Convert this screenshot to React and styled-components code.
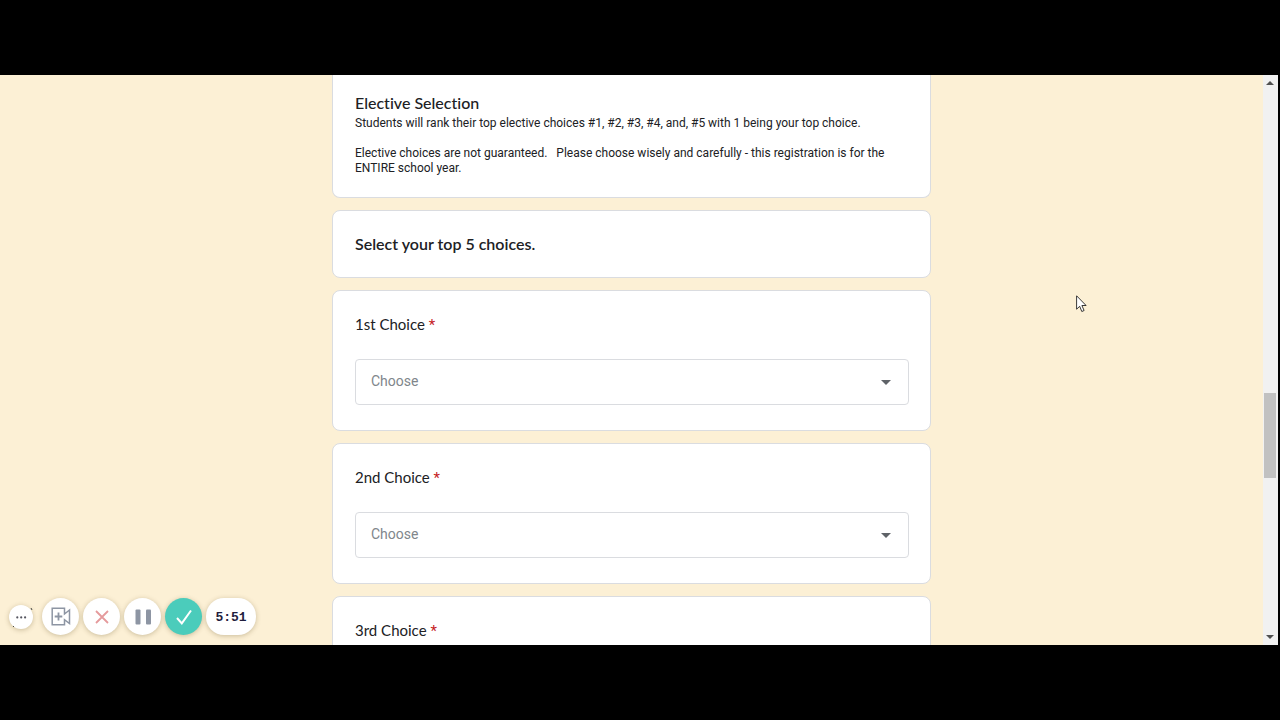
import React from "react";
import styled, { createGlobalStyle } from "styled-components";

const GlobalStyle = createGlobalStyle`
  * {
    box-sizing: border-box;
  }
  body {
    margin: 0;
    background: #000;
    font-family: Roboto, "Liberation Sans", sans-serif;
    font-variant-ligatures: none;
    color: #202124;
  }
`;

const Page = styled.div`
  height: 100vh;
  padding: 75px 2px 75px 0;
  background: #000;
`;
const Screen = styled.div`
  position: relative;
  display: flex;
  height: 100%;
  overflow: hidden;
  background: #fcf0d5;
`;
const Form = styled.form`
  flex: 1;
  display: flex;
  flex-direction: column;
  align-items: center;
  gap: 12px;
`;
const Card = styled.section`
  width: 100%;
  max-width: 599px;
  flex-shrink: 0;
  padding: ${(props) => (props.$compact ? "21px 22px" : "22px 21px 25px 22px")};
  border: 1px solid #dadce0;
  border-radius: 8px;
  background: #fff;
`;
const Title = styled.h2`
  margin: 0;
  font-family: Lato, sans-serif;
  font-size: 16px;
  font-weight: ${(props) => (props.$bold ? 600 : 500)};
  line-height: 24px;
`;
const IntroCard = styled(Card)`
  padding: 16px 22px 21px;
  border-top: 0;
  border-radius: 0 0 8px 8px;

  ${Title} {
    margin-bottom: 1px;
  }
`;
const Text = styled.p`
  margin: 0 0 15px;
  font-size: 12px;
  line-height: 15px;
  white-space: pre-wrap;

  &:last-child {
    margin: 0;
  }
`;
const Label = styled.label`
  display: block;
  margin-bottom: 24px;
  font-family: Lato, sans-serif;
  font-size: 15px;
  line-height: 22px;
`;
const Required = styled.span`
  color: #c5221f;
  font-family: Roboto, sans-serif;
  line-height: 1;
`;
const SelectBox = styled.div`
  display: grid;
  align-items: center;

  > * {
    grid-area: 1 / 1;
  }
`;
const Select = styled.select`
  width: 100%;
  height: 46px;
  padding: 0 15px 2px;
  appearance: none;
  border: 1px solid #dadce0;
  border-radius: 4px;
  background: #fff;
  color: #80868b;
  font-family: Roboto, sans-serif;
  font-size: 14px;
`;
const Caret = styled.svg`
  justify-self: end;
  margin-right: 18px;
  pointer-events: none;
`;

const Scrollbar = styled.div`
  display: flex;
  flex-direction: column;
  align-items: center;
  width: 15px;
  padding-right: 1px;
  background: #f1f1f1;
`;
const ScrollButton = styled.button`
  display: flex;
  align-items: center;
  justify-content: center;
  width: 100%;
  height: 16px;
  padding: 0;
  border: 0;
  background: none;
`;
const ScrollGap = styled.div`
  flex: ${(props) => props.$size};
`;
const Thumb = styled.div`
  flex: 85;
  width: 12px;
  background: #c1c1c1;
`;

const Recorder = styled.div`
  position: absolute;
  left: 9px;
  bottom: 10px;
  display: flex;
  align-items: center;
  gap: 4px;
`;
const RoundButton = styled.button`
  display: flex;
  align-items: center;
  justify-content: center;
  width: 37px;
  height: 37px;
  padding: 0;
  border: 0;
  border-radius: 50%;
  background: ${(props) => (props.$done ? "#4bccbb" : "#fff")};
  box-shadow: 0 1px 5px rgba(90, 70, 20, 0.3);
`;
const MoreButton = styled(RoundButton)`
  width: 24px;
  height: 24px;
  margin-right: 5px;
`;
const Timer = styled.time`
  display: flex;
  align-items: center;
  justify-content: center;
  width: 50px;
  height: 37px;
  padding-top: 2px;
  border-radius: 18px;
  background: #fff;
  box-shadow: 0 1px 5px rgba(90, 70, 20, 0.3);
  color: #1f1d3d;
  font-family: "Liberation Mono", monospace;
  font-size: 13px;
  font-weight: 700;
`;
const Pointer = styled.svg`
  position: absolute;
  top: 220px;
  right: 191px;
`;

const choices = ["1st Choice", "2nd Choice", "3rd Choice"];

const Choice = ({ id, name }) => (
  <Card>
    <Label htmlFor={id}>
      {name} <Required>*</Required>
    </Label>
    <SelectBox>
      <Select id={id} required defaultValue="">
        <option value="">Choose</option>
      </Select>
      <Caret width="10" height="5" viewBox="0 0 10 5">
        <path d="M0 0h10L5 5z" fill="#5f6368" />
      </Caret>
    </SelectBox>
  </Card>
);

const ScrollArrow = ({ down }) => (
  <svg width="8" height="4" viewBox="0 0 8 4">
    <path d={down ? "M0 0h8L4 4z" : "M0 4h8L4 0z"} fill="#505050" />
  </svg>
);

const RecorderBar = () => (
  <Recorder>
    <MoreButton aria-label="More options">
      <svg width="24" height="24" viewBox="0 0 24 24" overflow="visible">
        <path d="M22 3l1 2M4 21l1 1" stroke="#4a4a45" />
        <g fill="#55555f">
          <circle cx="8.3" cy="12.4" r="1.1" />
          <circle cx="12.2" cy="12.4" r="1.1" />
          <circle cx="16.1" cy="12.4" r="1.1" />
        </g>
      </svg>
    </MoreButton>
    <RoundButton aria-label="Add clip">
      <svg width="20" height="20" viewBox="0 0 20 20" fill="none" stroke="#8d95a3" strokeWidth="1.5">
        <path d="M13.5 6.5V1.2H1.2v16.6h12.3v-5.1l5 3.8V3l-5 4z" />
        <path d="M7.5 5.5v8M3.7 9.5h7.6" strokeWidth="1.8" />
      </svg>
    </RoundButton>
    <RoundButton aria-label="Cancel recording">
      <svg width="14" height="14" viewBox="0 0 14 14">
        <path d="M1 1l12 12M13 1L1 13" stroke="#e59a9c" strokeWidth="1.8" />
      </svg>
    </RoundButton>
    <RoundButton aria-label="Pause recording">
      <svg width="16" height="16" viewBox="0 0 16 16" fill="#8d95a3">
        <rect x="0.5" y="0.5" width="5" height="15" rx="1" />
        <rect x="11" y="0.5" width="5" height="15" rx="1" />
      </svg>
    </RoundButton>
    <RoundButton $done aria-label="Finish recording">
      <svg width="16" height="16" viewBox="0 0 16 16">
        <path d="M1 9l4.8 5.3L15 1.5" fill="none" stroke="#fff" strokeWidth="2" />
      </svg>
    </RoundButton>
    <Timer>5:51</Timer>
  </Recorder>
);

const App = () => {
  return (
    <Page>
      <GlobalStyle />
      <Screen>
        <Form>
          <IntroCard>
            <Title>Elective Selection</Title>
            <Text>
              Students will rank their top elective choices #1, #2, #3, #4, and, #5 with 1 being your top choice.
            </Text>
            <Text>
              {"Elective choices are not guaranteed.   Please choose wisely and carefully - this registration is for the ENTIRE school year."}
            </Text>
          </IntroCard>
          <Card $compact>
            <Title $bold>Select your top 5 choices.</Title>
          </Card>
          {choices.map((name, i) => (
            <Choice key={name} id={`choice-${i + 1}`} name={name} />
          ))}
        </Form>
        <Scrollbar>
          <ScrollButton aria-label="Scroll up">
            <ScrollArrow />
          </ScrollButton>
          <ScrollGap $size={302} />
          <Thumb />
          <ScrollGap $size={151} />
          <ScrollButton aria-label="Scroll down">
            <ScrollArrow down />
          </ScrollButton>
        </Scrollbar>
        <RecorderBar />
        <Pointer width="11" height="18" viewBox="0 0 11 18">
          <path
            d="M.6.8v13.4l3.1-2.9 2.1 5.2 2.3-1-2.2-5h4.2z"
            fill="#fff"
            stroke="#222"
            strokeWidth="0.9"
          />
        </Pointer>
      </Screen>
    </Page>
  );
};

export default App;
